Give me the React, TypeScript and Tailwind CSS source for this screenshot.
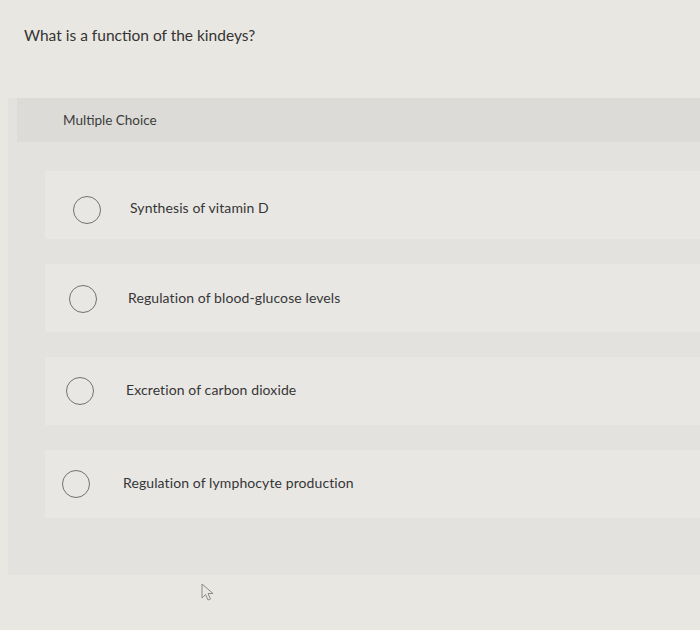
const options = [
  { label: "Synthesis of vitamin D", pad: "pl-[28px] pt-[9px]", gap: "gap-[29px]" },
  { label: "Regulation of blood-glucose levels", pad: "pl-[24px] pt-[2px]", gap: "gap-[31px]" },
  { label: "Excretion of carbon dioxide", pad: "pl-[21px]", gap: "gap-[32px]" },
  { label: "Regulation of lymphocyte production", pad: "pl-[17px]", gap: "gap-[33px]" },
];

function Radio() {
  return <span className="block w-[28px] h-[28px] shrink-0 rounded-full border-[1.5px] border-[#727170]" />;
}

export default function App() {
  return (
    <div
      className="w-[700px] h-[630px] overflow-hidden bg-[#e9e7e2] flex flex-col"
      style={{ fontFamily: "Lato, 'Open Sans', sans-serif" }}
    >
      <h1 className="pl-[24px] pt-[24px] h-[98px] text-[15.5px] leading-[22px] text-[#343434]">
        What is a function of the kindeys?
      </h1>

      {/* Question panel */}
      <div className="ml-[8px] h-[477px] bg-[#e3e2de] flex flex-col">
        <div className="ml-[9px] h-[44px] bg-[#dcdbd7] flex items-center pl-[46px] text-[13.5px] text-[#3b3b3b]">
          Multiple Choice
        </div>

        <div className="flex flex-col gap-[25px] pt-[29px] ml-[37px]">
          {options.map((o) => (
            <div
              key={o.label}
              className={`h-[68px] bg-[#e8e7e4] flex items-center ${o.pad} ${o.gap} text-[14px] tracking-[0.1px] text-[#363636]`}
            >
              <Radio />
              <span className="mb-[4px]">{o.label}</span>
            </div>
          ))}
        </div>
      </div>

      {/* mouse pointer */}
      <div className="pl-[200px] pt-[8px]">
        <svg width="16" height="20" viewBox="0 0 16 20" fill="none" stroke="#8a8a88" strokeWidth="1">
          <path d="M2 1 L2 15 L5.5 11.5 L8 17 L10.5 16 L8 10.5 L13 10.5 Z" strokeLinejoin="round" />
        </svg>
      </div>
    </div>
  );
}
